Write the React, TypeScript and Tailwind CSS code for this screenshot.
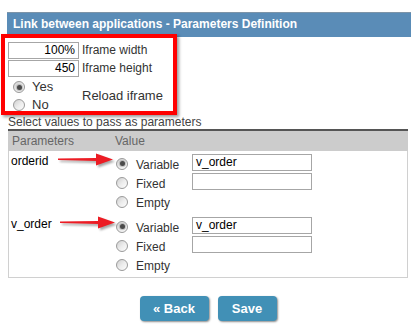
import React from 'react'

const Radio = ({ checked }: { checked?: boolean }) => (
  <span className='w-[12px] h-[12px] shrink-0 rounded-full border border-[#9a9a9a] bg-gradient-to-br from-[#cfcfcf] via-[#ececec] to-[#fdfdfd] flex items-center justify-center'>
    {checked && <span className='w-[5px] h-[5px] rounded-full bg-[#4a4a4a] shadow-[0_0_1px_1px_rgba(90,90,90,0.35)]' />}
  </span>
)

const Box = ({ value = '', align = 'left', width = 'w-[120px]' }: { value?: string; align?: 'left' | 'right'; width?: string }) => (
  <div
    className={`${width} h-[17px] border border-[#a6a6a6] bg-white text-[12px] leading-[15px] text-black px-[3px] ${
      align === 'right' ? 'text-right' : 'text-left'
    }`}
  >
    {value}
  </div>
)

const Arrow = ({ top, left }: { top: number; left: number }) => (
  <svg
    className='absolute drop-shadow-[2px_2px_1px_rgba(0,0,0,0.35)]'
    style={{ top, left }}
    width='60'
    height='16'
    viewBox='0 0 60 16'
  >
    <polygon points='0,6.5 0,8 38,9 38,13.5 55,7.5 38,1.5 38,6' fill='#ec1c24' />
  </svg>
)

const ParamRow = ({ name, value }: { name: string; value: string }) => (
  <div className='flex h-[63px] pt-[3px]'>
    <div className='w-[105px] pl-[2px] leading-[14px] text-black'>{name}</div>
    <div className='w-[78px] flex flex-col'>
      {['Variable', 'Fixed', 'Empty'].map((opt, i) => (
        <div key={opt} className='h-[19px] flex items-center gap-[8px] pl-[2px] text-[#333]'>
          <Radio checked={i === 0} />
          <span className='pt-[2px]'>{opt}</span>
        </div>
      ))}
    </div>
    <div className='flex flex-col gap-[2px]'>
      <Box value={value} />
      <Box />
    </div>
  </div>
)

const App = () => {
  return (
    <div className="relative w-[419px] h-[332px] bg-white overflow-hidden font-['Liberation_Sans',Arial,sans-serif] text-[12px] text-[#333]">
      <div className='pt-[12px] pl-[7px]'>
        <div className='w-[404px] h-[25px] bg-[#5a8cb7] border-t border-[#7d94a8] text-white font-bold text-[12px] leading-[23px] pl-[6px]'>
          Link between applications - Parameters Definition
        </div>
      </div>

      <div className='pl-[8px] pt-[4px]'>
        <div className='flex flex-col'>
          <div className='flex items-center gap-[3px]'>
            <Box value='100%' align='right' width='w-[71px]' />
            <span>Iframe width</span>
          </div>
          <div className='flex items-center gap-[3px]'>
            <Box value='450' align='right' width='w-[71px]' />
            <span>Iframe height</span>
          </div>
        </div>

        <div className='flex items-center mt-[1px]'>
          <div className='w-[74px] flex flex-col pl-[5px]'>
            <div className='h-[18px] flex items-center gap-[7px]'>
              <Radio checked />
              <span className='text-[13px]'>Yes</span>
            </div>
            <div className='h-[18px] flex items-center gap-[7px]'>
              <Radio />
              <span className='text-[13px]'>No</span>
            </div>
          </div>
          <span className='text-[13px]'>Reload iframe</span>
        </div>

        <div className='mt-[1px] leading-[14px] text-[#444]'>Select values to pass as parameters</div>

        <div className='w-[400px] border-t-2 border-[#555]'>
          <div className='h-[20px] bg-[#cccccc] flex items-center text-[#666]'>
            <span className='w-[107px] pl-[4px]'>Parameters</span>
            <span>Value</span>
          </div>
          <div className='border-x border-b border-[#d0d0d0]'>
            <ParamRow name='orderid' value='v_order' />
            <ParamRow name='v_order' value='v_order' />
          </div>
        </div>

        <div className='w-[400px] flex justify-center gap-[9px] mt-[18px]'>
          <button className='w-[69px] h-[25px] rounded-[4px] bg-[#4190b6] text-white font-bold text-[13px] shadow-[1px_1px_2px_rgba(0,0,0,0.45)]'>
            « Back
          </button>
          <button className='w-[59px] h-[25px] rounded-[4px] bg-[#4190b6] text-white font-bold text-[13px] shadow-[1px_1px_2px_rgba(0,0,0,0.45)]'>
            Save
          </button>
        </div>
      </div>

      <div className='absolute left-[1px] top-[34px] w-[176px] h-[81px] border-4 border-[#ff0000] shadow-[2px_2px_3px_rgba(0,0,0,0.4)]' />
      <Arrow top={152} left={58} />
      <Arrow top={215} left={60} />
    </div>
  )
}

export default App
